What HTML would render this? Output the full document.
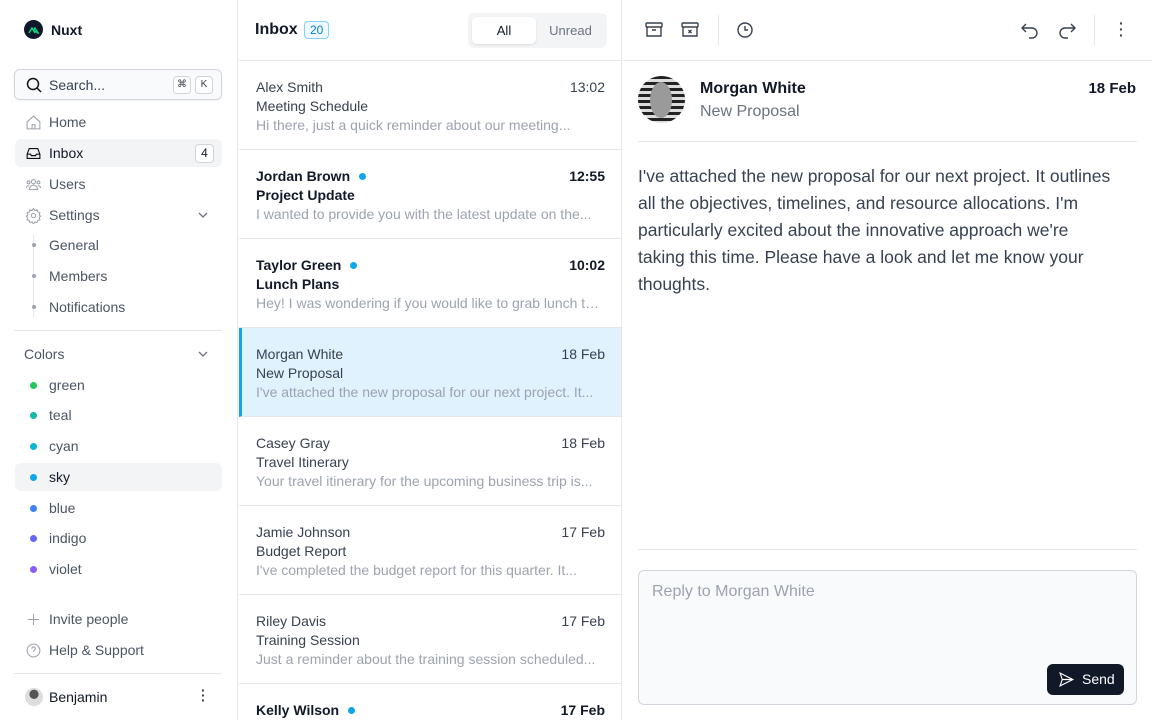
<!DOCTYPE html>
<html><head><meta charset="utf-8"><style>
*{box-sizing:border-box;margin:0;padding:0}
html,body{width:1152px;height:720px;overflow:hidden}
body{font-family:"Liberation Sans",sans-serif;color:#111827;background:#fff;position:relative;font-size:14px}
.sb{position:absolute;left:0;top:0;width:238px;height:720px;border-right:1px solid #e5e7eb}
.logo{position:absolute;left:24px;top:20px;display:flex;align-items:center;gap:8px;font-weight:bold;font-size:14px}
.logo .c{width:19px;height:19px;border-radius:50%;background:#0f172a;display:flex;align-items:center;justify-content:center}
.search{position:absolute;left:14px;top:69px;width:208px;height:31px;border:1px solid #d1d5db;border-radius:6px;background:#f9fafb;box-shadow:0 1px 2px rgba(0,0,0,.06)}
.search span{position:absolute;left:34px;top:7px;color:#374151;font-size:14px}
.kbd{position:absolute;top:6px;width:18px;height:18px;border:1px solid #d1d5db;border-radius:4px;font-size:10px;text-align:center;line-height:16px;color:#374151;background:#fff}
.nav{position:absolute;left:15px;width:207px;height:28px;border-radius:6px;display:flex;align-items:center;color:#4b5563;font-size:14px}
.nav.act{background:#f3f4f6;color:#111827}
.nav svg{position:absolute;left:10px}
.nav .t{position:absolute;left:34px}
.badge{position:absolute;right:8px;width:19px;height:19px;border:1px solid #d1d5db;border-radius:4px;font-size:12px;text-align:center;line-height:17px;background:#fff}
.dot{position:absolute;left:15px;width:7px;height:7px;border-radius:50%}
.sep{position:absolute;left:14px;width:208px;height:1px;background:#e5e7eb}
.list{position:absolute;left:239px;top:0;width:383px;height:720px;border-right:1px solid #e5e7eb;overflow:hidden}
.lh{height:61px;border-bottom:1px solid #e5e7eb;position:relative}
.row{height:89px;border-bottom:1px solid #e5e7eb;position:relative;padding:0 16px;font-size:14px;color:#374151}
.row .n{position:absolute;left:17px;top:18px}
.row .d{position:absolute;right:16px;top:18px}
.row .s{position:absolute;left:17px;top:37px}
.row .p{position:absolute;left:17px;top:56px;color:#9ca3af;width:345px;white-space:nowrap;overflow:hidden;text-overflow:ellipsis}
.row.b .n,.row.b .s,.row.b .d{font-weight:bold;color:#111827}
.bl{display:inline-block;width:7px;height:7px;border-radius:50%;background:#0ea5e9;margin-left:9px;vertical-align:1px}
.row.sel{background:#e0f2fe;border-left:3px solid #0ea5e9}
.det{position:absolute;left:623px;top:0;width:529px;height:720px}
</style></head><body>
<div class="sb">
 <div class="logo"><div class="c"><svg width="11" height="8" viewBox="0 0 11 8"><path d="M1 7L4 2L7 7M5.5 4.5L7 2L10 7Z" fill="none" stroke="#00dc82" stroke-width="1.4"/></svg></div>Nuxt</div>
 <div class="search"><svg style="position:absolute;left:11px;top:7px" width="16" height="16" viewBox="0 0 16 16"><circle cx="7" cy="7" r="5.5" fill="none" stroke="#111" stroke-width="1.5"/><path d="M11 11l4 4" stroke="#111" stroke-width="1.5"/></svg><span>Search...</span><div class="kbd" style="left:158px">⌘</div><div class="kbd" style="left:180px">K</div></div>
 <div class="nav" style="top:108px"><svg width="17" height="17" viewBox="0 0 24 24" fill="none" stroke="#9ca3af" stroke-width="1.5"><path d="M3 11l9-8 9 8v10H3z M10 21v-6h4v6"/></svg><span class="t">Home</span></div>
 <div class="nav act" style="top:139px"><svg width="17" height="17" viewBox="0 0 24 24" fill="none" stroke="#111" stroke-width="1.6"><path d="M3 13l3-8h12l3 8v6H3z M3 13h5l1 2h6l1-2h5"/></svg><span class="t">Inbox</span><div class="badge">4</div></div>
 <div class="nav" style="top:170px"><svg width="17" height="17" viewBox="0 0 24 24" fill="none" stroke="#9ca3af" stroke-width="1.5"><circle cx="12" cy="8" r="3"/><circle cx="5" cy="9" r="2"/><circle cx="19" cy="9" r="2"/><path d="M6 19a6 6 0 0112 0z M2 17a3 3 0 014-3 M22 17a3 3 0 00-4-3"/></svg><span class="t">Users</span></div>
 <div class="nav" style="top:201px"><svg width="17" height="17" viewBox="0 0 24 24" fill="none" stroke="#9ca3af" stroke-width="1.5"><circle cx="12" cy="12" r="3"/><path d="M12 2l2 3 3-1 1 3 3 1-1 3 2 2-2 2 1 3-3 1-1 3-3-1-2 3-2-3-3 1-1-3-3-1 1-3-2-2 2-2-1-3 3-1 1-3 3 1z"/></svg><span class="t">Settings</span><svg style="left:182px" width="12" height="12" viewBox="0 0 12 12"><path d="M2 4l4 4 4-4" fill="none" stroke="#6b7280" stroke-width="1.3"/></svg></div>
 <div style="position:absolute;left:33px;top:234px;width:1px;height:84px;background:#e5e7eb"></div>
 <div class="nav" style="top:231px"><span class="dot" style="left:17px;width:4px;height:4px;background:#9ca3af"></span><span class="t">General</span></div>
 <div class="nav" style="top:262px"><span class="dot" style="left:17px;width:4px;height:4px;background:#9ca3af"></span><span class="t">Members</span></div>
 <div class="nav" style="top:293px"><span class="dot" style="left:17px;width:4px;height:4px;background:#9ca3af"></span><span class="t">Notifications</span></div>
 <div class="sep" style="top:330px"></div>
 <div class="nav" style="top:340px"><span class="t" style="left:9px">Colors</span><svg style="left:182px" width="12" height="12" viewBox="0 0 12 12"><path d="M2 4l4 4 4-4" fill="none" stroke="#6b7280" stroke-width="1.3"/></svg></div>
 <div class="nav" style="top:371px"><span class="dot" style="background:#22c55e"></span><span class="t">green</span></div>
 <div class="nav" style="top:401px"><span class="dot" style="background:#14b8a6"></span><span class="t">teal</span></div>
 <div class="nav" style="top:432px"><span class="dot" style="background:#06b6d4"></span><span class="t">cyan</span></div>
 <div class="nav act" style="top:463px"><span class="dot" style="background:#0ea5e9"></span><span class="t">sky</span></div>
 <div class="nav" style="top:494px"><span class="dot" style="background:#3b82f6"></span><span class="t">blue</span></div>
 <div class="nav" style="top:524px"><span class="dot" style="background:#6366f1"></span><span class="t">indigo</span></div>
 <div class="nav" style="top:555px"><span class="dot" style="background:#8b5cf6"></span><span class="t">violet</span></div>
 <div class="nav" style="top:605px"><svg width="17" height="17" viewBox="0 0 24 24" fill="none" stroke="#9ca3af" stroke-width="1.5"><path d="M12 4v16M4 12h16"/></svg><span class="t">Invite people</span></div>
 <div class="nav" style="top:636px"><svg width="17" height="17" viewBox="0 0 24 24" fill="none" stroke="#9ca3af" stroke-width="1.5"><circle cx="12" cy="12" r="9"/><path d="M9.5 9.5a2.5 2.5 0 115 0c0 2-2.5 2-2.5 4M12 17v.5"/></svg><span class="t">Help &amp; Support</span></div>
 <div class="sep" style="top:673px"></div>
 <div class="nav" style="top:683px"><span style="position:absolute;left:10px;width:18px;height:18px;border-radius:50%;background:radial-gradient(circle at 50% 35%,#555 30%,#ddd 32%)"></span><span class="t" style="color:#111827">Benjamin</span><span style="position:absolute;left:186px;font-weight:bold;color:#374151;line-height:5px;top:5px;font-size:14px">·<br>·<br>·</span></div>
</div>
<div class="list">
 <div class="lh"><span style="position:absolute;left:16px;top:21px;font-weight:bold;font-size:16px">Inbox</span><span style="position:absolute;left:65px;top:21px;border:1px solid #7dd3fc;background:#f0f9ff;color:#0284c7;font-size:12px;border-radius:4px;padding:1px 5px">20</span>
 <div style="position:absolute;left:229px;top:13px;width:139px;height:35px;background:#f3f4f6;border-radius:6px"><div style="position:absolute;left:4px;top:4px;width:64px;height:27px;background:#fff;border-radius:5px;box-shadow:0 1px 2px rgba(0,0,0,.1);text-align:center;line-height:27px;font-size:13px">All</div><div style="position:absolute;left:70px;top:4px;width:65px;line-height:27px;text-align:center;font-size:13px;color:#6b7280">Unread</div></div></div>
 <div class="row"><span class="n">Alex Smith</span><span class="d">13:02</span><span class="s">Meeting Schedule</span><span class="p">Hi there, just a quick reminder about our meeting...</span></div>
 <div class="row b"><span class="n">Jordan Brown<i class="bl"></i></span><span class="d">12:55</span><span class="s">Project Update</span><span class="p">I wanted to provide you with the latest update on the...</span></div>
 <div class="row b"><span class="n">Taylor Green<i class="bl"></i></span><span class="d">10:02</span><span class="s">Lunch Plans</span><span class="p">Hey! I was wondering if you would like to grab lunch thi...</span></div>
 <div class="row sel"><span class="n" style="left:14px">Morgan White</span><span class="d">18 Feb</span><span class="s" style="left:14px">New Proposal</span><span class="p" style="left:14px">I've attached the new proposal for our next project. It...</span></div>
 <div class="row"><span class="n">Casey Gray</span><span class="d">18 Feb</span><span class="s">Travel Itinerary</span><span class="p">Your travel itinerary for the upcoming business trip is...</span></div>
 <div class="row"><span class="n">Jamie Johnson</span><span class="d">17 Feb</span><span class="s">Budget Report</span><span class="p">I've completed the budget report for this quarter. It...</span></div>
 <div class="row"><span class="n">Riley Davis</span><span class="d">17 Feb</span><span class="s">Training Session</span><span class="p">Just a reminder about the training session scheduled...</span></div>
 <div class="row b"><span class="n">Kelly Wilson<i class="bl"></i></span><span class="d">17 Feb</span></div>
</div>
<div class="det">
 <div style="height:61px;border-bottom:1px solid #e5e7eb;position:relative">
  <svg style="position:absolute;left:21px;top:21px" width="20" height="18" viewBox="0 0 20 18" fill="none" stroke="#374151" stroke-width="1.4"><rect x="2" y="2" width="16" height="4" rx="1"/><path d="M3 6v9h14V6M8 9h4"/></svg>
  <svg style="position:absolute;left:57px;top:21px" width="20" height="18" viewBox="0 0 20 18" fill="none" stroke="#374151" stroke-width="1.4"><rect x="2" y="2" width="16" height="4" rx="1"/><path d="M3 6v9h14V6M8.5 9l3 3M11.5 9l-3 3"/></svg>
  <div style="position:absolute;left:95px;top:15px;width:1px;height:31px;background:#e5e7eb"></div>
  <svg style="position:absolute;left:113px;top:21px" width="18" height="18" viewBox="0 0 18 18" fill="none" stroke="#374151" stroke-width="1.4"><circle cx="9" cy="9" r="7"/><path d="M9 5v4h3"/></svg>
  <svg style="position:absolute;left:397px;top:21px" width="20" height="18" viewBox="0 0 20 18" fill="none" stroke="#374151" stroke-width="1.4"><path d="M6 3L2 7l4 4M2 7h10a5 5 0 010 10h-3"/></svg>
  <svg style="position:absolute;left:434px;top:21px" width="20" height="18" viewBox="0 0 20 18" fill="none" stroke="#374151" stroke-width="1.4"><path d="M14 3l4 4-4 4M18 7H8a5 5 0 000 10h3"/></svg>
  <div style="position:absolute;left:471px;top:15px;width:1px;height:31px;background:#e5e7eb"></div>
  <span style="position:absolute;left:496px;top:20px;font-weight:bold;line-height:6px;color:#374151">·<br>·<br>·</span>
 </div>
 <div style="position:absolute;left:15px;top:76px;width:47px;height:47px;border-radius:50%;overflow:hidden;background:repeating-linear-gradient(180deg,#222 0 3px,#ddd 3px 6px)"><div style="position:absolute;left:12px;top:6px;width:22px;height:36px;border-radius:50%;background:#9a9a9a"></div></div>
 <span style="position:absolute;left:77px;top:80px;font-weight:bold;font-size:16px">Morgan White</span>
 <span style="position:absolute;right:16px;top:80px;font-weight:bold;font-size:15px">18 Feb</span>
 <span style="position:absolute;left:77px;top:103px;font-size:16px;color:#6b7280">New Proposal</span>
 <div style="position:absolute;left:15px;top:141px;width:499px;height:1px;background:#e5e7eb"></div>
 <p style="position:absolute;left:15px;top:163px;width:510px;font-size:17.5px;line-height:27px;color:#374151;white-space:nowrap">I've attached the new proposal for our next project. It outlines<br>all the objectives, timelines, and resource allocations. I'm<br>particularly excited about the innovative approach we're<br>taking this time. Please have a look and let me know your<br>thoughts.</p>
 <div style="position:absolute;left:15px;top:549px;width:499px;height:1px;background:#e5e7eb"></div>
 <div style="position:absolute;left:15px;top:570px;width:499px;height:135px;border:1px solid #d1d5db;border-radius:6px;background:#f9fafb">
  <span style="position:absolute;left:13px;top:12px;font-size:16px;color:#9ca3af">Reply to Morgan White</span>
  <div style="position:absolute;left:408px;top:93px;width:77px;height:31px;background:#111827;border-radius:6px;color:#fff;font-size:14px"><svg style="position:absolute;left:11px;top:7px" width="17" height="17" viewBox="0 0 24 24" fill="none" stroke="#fff" stroke-width="1.6"><path d="M3 3l18 9-18 9 3-9z M6 12h15"/></svg><span style="position:absolute;left:35px;top:7px">Send</span></div>
 </div>
</div>
</body></html>
